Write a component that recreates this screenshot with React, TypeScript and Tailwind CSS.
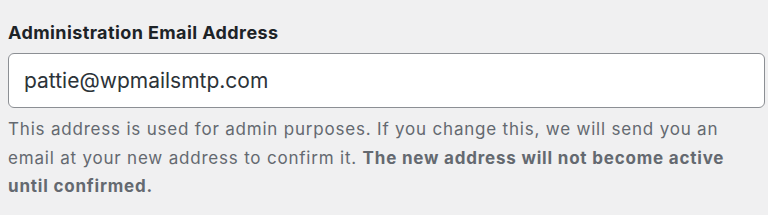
export default function App() {
    return (
        <div
            className="h-[215px] w-[768px] bg-[#f0f0f1] pl-2 pr-1 pt-[22px]"
            style={{ fontFamily: "Inter, 'Noto Sans', sans-serif" }}
        >
            <label className="block text-[18px] font-bold leading-[22px] tracking-[0.4px] text-[#1d2327]">
                Administration Email Address
            </label>

            <div className="mt-[9px] flex h-[55px] w-[757px] items-center rounded-[6px] border border-[#8c8f94] bg-white px-[15px]">
                <span className="text-[21px] text-[#2c3338]">pattie@wpmailsmtp.com</span>
            </div>

            <p className="mt-[7px] w-[745px] text-[17px] leading-[28.5px] tracking-[0.8px] text-[#646970]">
                This address is used for admin purposes. If you change this, we will send you an
                email at your new address to confirm it.{" "}
                <strong className="font-bold">The new address will not become active until confirmed.</strong>
            </p>
        </div>
    );
}
